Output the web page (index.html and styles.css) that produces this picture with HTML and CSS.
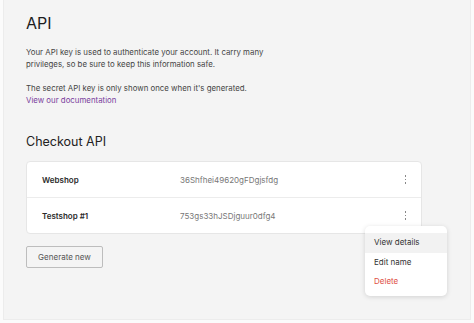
FILE: index.html
```html
<!DOCTYPE html>
<html lang="en">
<head>
  <meta charset="UTF-8">
  <title>API</title>
  <link rel="stylesheet" href="styles.css">
</head>
<body>
  <div class="page">
    <h1>API</h1>
    <p>Your API key is used to authenticate your account. It carry many<br>privileges, so be sure to keep this information safe.</p>
    <p>The secret API key is only shown once when it's generated.<br><a href="#">View our documentation</a></p>

    <h2>Checkout API</h2>
    <div class="keys">
      <div class="key-row">
        <span class="key-name">Webshop</span>
        <span class="key-value">36Shfhei49620gFDgjsfdg</span>
        <span class="kebab"><i></i><i></i><i></i></span>
      </div>
      <div class="key-row">
        <span class="key-name">Testshop #1</span>
        <span class="key-value">753gs33hJSDjguur0dfg4</span>
        <span class="kebab"><i></i><i></i><i></i></span>
      </div>

      <!-- menu for the second row -->
      <div class="menu">
        <div class="menu-item active">View details</div>
        <div class="menu-item">Edit name</div>
        <div class="menu-item danger">Delete</div>
      </div>
    </div>

    <button class="btn">Generate new</button>
  </div>
</body>
</html>
```

FILE: styles.css
```css
body {
  margin: 0;
  background-color: #fbfbfb;
  font-family: Inter, "Noto Sans", sans-serif;
  color: #333;
}

.page {
  margin: 0 3px;
  height: 320px;
  box-sizing: border-box;
  padding: 13px 22px 0;
  background-color: #f4f4f4;
  border: 1px solid #ececec;
  border-top: none;
}

h1 {
  margin: 0 0 13px;
  font-size: 16px;
  line-height: 20px;
  font-weight: 400;
  color: #1d1d1d;
}

p {
  margin: 0 0 12px;
  font-size: 7.85px;
  line-height: 12px;
  color: #444;
}

a {
  color: #7a3e9d;
  text-decoration: none;
}

h2 {
  margin: 28px 0 11px;
  font-size: 12.5px;
  line-height: 16px;
  font-weight: 400;
  color: #222;
}

.keys {
  position: relative;
  width: 394px;
  background-color: white;
  border: 1px solid #e6e6e6;
  border-radius: 4px;
}

.key-row {
  display: flex;
  align-items: center;
  height: 35px;
  padding: 0 12px 0 15px;
  font-size: 8px;
}

.key-row + .key-row {
  border-top: 1px solid #ececec;
}

.key-name {
  width: 138px;
  font-weight: 600;
  color: #2a2a2a;
}

.key-value {
  flex: 1;
  color: #777;
}

.kebab {
  display: flex;
  flex-direction: column;
  gap: 2px;
  padding: 0 3px;
}

.kebab i {
  width: 1.5px;
  height: 1.5px;
  background-color: #888;
}

.menu {
  position: absolute;
  top: 64px;
  left: 338px;
  width: 82px;
  padding: 7px 0 4px;
  background-color: white;
  border-radius: 5px;
  box-shadow: 0 1px 5px rgba(0, 0, 0, 0.14);
}

.menu-item {
  height: 19.5px;
  line-height: 19.5px;
  padding: 0 9px;
  font-size: 8px;
  color: #333;
}

.menu-item.active {
  background-color: #f2f2f2;
}

.menu-item.danger {
  color: #de4f45;
}

.btn {
  margin-top: 12px;
  width: 77px;
  height: 22px;
  padding: 0;
  font-family: inherit;
  font-size: 8px;
  color: #555;
  background-color: #f4f4f4;
  border: 1px solid #bdbdbd;
  border-radius: 2px;
}
```
